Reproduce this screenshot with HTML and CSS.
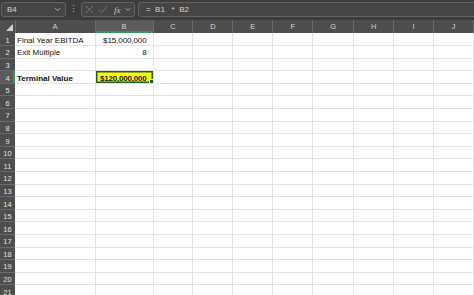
FILE: index.html
```html
<!DOCTYPE html>
<html lang="en">
<head>
    <meta charset="UTF-8">
    <meta name="viewport" content="width=device-width, initial-scale=1.0">
    <title>Terminal Value</title>
    <link rel="stylesheet" href="styles.css">
</head>
<body>
    <div class="toolbar">
        <div class="namebox">
            <span>B4</span>
            <svg class="chev" width="7" height="5" viewBox="0 0 7 5"><path d="M1 1.2 L3.5 3.7 L6 1.2" fill="none" stroke="#b5b5b5" stroke-width="1"/></svg>
        </div>
        <span class="dots">&#8942;</span>
        <div class="fxbox">
            <svg width="9" height="9" viewBox="0 0 9 9"><path d="M1 1 L8 8 M8 1 L1 8" stroke="#7c7c7c" stroke-width="0.9"/></svg>
            <svg width="10" height="9" viewBox="0 0 10 9"><path d="M1 4.8 L3.8 7.6 L9 1.4" fill="none" stroke="#7c7c7c" stroke-width="0.9"/></svg>
            <i class="fx">fx</i>
            <svg width="6" height="5" viewBox="0 0 6 5"><path d="M0.8 1.2 L3 3.5 L5.2 1.2" fill="none" stroke="#b5b5b5" stroke-width="0.9"/></svg>
        </div>
        <div class="formula">=&nbsp;&nbsp;B1&nbsp;&nbsp;&nbsp;*&nbsp;&nbsp;B2</div>
    </div>

    <table class="sheet">
        <colgroup>
            <col class="c-rh"><col class="c-a"><col class="c-b"><col><col><col><col><col class="c-g"><col><col><col>
        </colgroup>
        <tr class="head">
            <th class="corner"></th><th>A</th><th class="sel">B</th><th>C</th><th>D</th><th>E</th><th>F</th><th>G</th><th>H</th><th>I</th><th>J</th>
        </tr>
        <tr><td class="rh">1</td><td class="txt">Final Year EBITDA</td><td class="num">$15,000,000</td><td></td><td></td><td></td><td></td><td></td><td></td><td></td><td></td></tr>
        <tr><td class="rh">2</td><td class="txt">Exit Multiple</td><td class="num">8</td><td></td><td></td><td></td><td></td><td></td><td></td><td></td><td></td></tr>
        <tr><td class="rh">3</td><td></td><td></td><td></td><td></td><td></td><td></td><td></td><td></td><td></td><td></td></tr>
        <tr><td class="rh sel">4</td><td class="txt bold">Terminal Value</td><td class="num bold active">$120,000,000</td><td></td><td></td><td></td><td></td><td></td><td></td><td></td><td></td></tr>
        <tr><td class="rh">5</td><td></td><td></td><td></td><td></td><td></td><td></td><td></td><td></td><td></td><td></td></tr>
        <tr><td class="rh">6</td><td></td><td></td><td></td><td></td><td></td><td></td><td></td><td></td><td></td><td></td></tr>
        <tr><td class="rh">7</td><td></td><td></td><td></td><td></td><td></td><td></td><td></td><td></td><td></td><td></td></tr>
        <tr><td class="rh">8</td><td></td><td></td><td></td><td></td><td></td><td></td><td></td><td></td><td></td><td></td></tr>
        <tr><td class="rh">9</td><td></td><td></td><td></td><td></td><td></td><td></td><td></td><td></td><td></td><td></td></tr>
        <tr><td class="rh">10</td><td></td><td></td><td></td><td></td><td></td><td></td><td></td><td></td><td></td><td></td></tr>
        <tr><td class="rh">11</td><td></td><td></td><td></td><td></td><td></td><td></td><td></td><td></td><td></td><td></td></tr>
        <tr><td class="rh">12</td><td></td><td></td><td></td><td></td><td></td><td></td><td></td><td></td><td></td><td></td></tr>
        <tr><td class="rh">13</td><td></td><td></td><td></td><td></td><td></td><td></td><td></td><td></td><td></td><td></td></tr>
        <tr><td class="rh">14</td><td></td><td></td><td></td><td></td><td></td><td></td><td></td><td></td><td></td><td></td></tr>
        <tr><td class="rh">15</td><td></td><td></td><td></td><td></td><td></td><td></td><td></td><td></td><td></td><td></td></tr>
        <tr><td class="rh">16</td><td></td><td></td><td></td><td></td><td></td><td></td><td></td><td></td><td></td><td></td></tr>
        <tr><td class="rh">17</td><td></td><td></td><td></td><td></td><td></td><td></td><td></td><td></td><td></td><td></td></tr>
        <tr><td class="rh">18</td><td></td><td></td><td></td><td></td><td></td><td></td><td></td><td></td><td></td><td></td></tr>
        <tr><td class="rh">19</td><td></td><td></td><td></td><td></td><td></td><td></td><td></td><td></td><td></td><td></td></tr>
        <tr><td class="rh">20</td><td></td><td></td><td></td><td></td><td></td><td></td><td></td><td></td><td></td><td></td></tr>
        <tr><td class="rh">21</td><td></td><td></td><td></td><td></td><td></td><td></td><td></td><td></td><td></td><td></td></tr>
    </table>
</body>
</html>
```

FILE: styles.css
```css
body {
    margin: 0;
    background-color: #3c3c3c;
    font-family: "Liberation Sans", Arial, sans-serif;
    font-size: 8px;
    overflow: hidden;
    height: 295px;
}
.toolbar {
    display: flex;
    height: 20px;
    padding: 2px 0 3px 1px;
    box-sizing: border-box;
    color: #d6d6d6;
}
.namebox, .fxbox, .formula {
    background-color: #454545;
    border: 1px solid #626262;
    border-radius: 3px;
    box-sizing: border-box;
    display: flex;
    align-items: center;
}
.namebox {
    width: 65px;
    padding: 0 4px 0 5px;
    justify-content: space-between;
}
.dots {
    width: 15px;
    text-align: center;
    line-height: 15px;
    font-size: 9px;
    color: #bdbdbd;
}
.fxbox {
    width: 54px;
    padding: 0 2px 0 3px;
    gap: 4px;
}
.fx {
    font-family: "Liberation Serif", serif;
    font-size: 9px;
    color: #c8c8c8;
    margin-left: 2px;
}
.formula {
    flex: 1;
    margin-left: 3px;
    margin-right: -4px;
    padding-left: 7px;
    font-size: 8px;
}
.sheet {
    border-collapse: collapse;
    table-layout: fixed;
    width: 474px;
}
.c-rh { width: 15px; }
.c-a { width: 80px; }
.c-b { width: 58px; }
.c-g { width: 41px; }
.sheet tr {
    height: 12.6px;
}
.sheet td, .sheet th {
    padding: 0;
    line-height: 8px;
    overflow: hidden;
    white-space: nowrap;
}
.sheet tr.head {
    height: 13px;
}
.head th {
    background-color: #4e4e4e;
    border-right: 1px solid #6a6a6a;
    color: #d4d4d4;
    font-weight: normal;
    font-size: 7.5px;
}
.head th.sel {
    background-color: #5b5b5b;
    box-shadow: inset 0 -2px 0 #2f9a5c;
}
.corner {
    position: relative;
}
.corner::after {
    content: "";
    position: absolute;
    right: 2px;
    bottom: 2px;
    border-style: solid;
    border-width: 0 0 7px 7px;
    border-color: transparent transparent #d2d2d2 transparent;
}
.sheet td {
    background-color: #ffffff;
    border-right: 1px solid #e2e2e2;
    border-bottom: 1px solid #e2e2e2;
    color: #111111;
    padding-top: 3px;
}
.sheet td.rh {
    background-color: #4e4e4e;
    border-right: none;
    border-bottom: 1px solid #6a6a6a;
    color: #e2e2e2;
    text-align: center;
    font-size: 7.5px;
}
.sheet td.rh.sel {
    background-color: #5b5b5b;
    box-shadow: inset -2px 0 0 #2f9a5c;
}
.sheet td.txt {
    padding-left: 2px;
}
.sheet td.num {
    text-align: right;
    padding-right: 6px;
    letter-spacing: -0.1px;
}
.bold {
    font-weight: bold;
}
.sheet td.active {
    background-color: #ffff00;
    box-shadow: inset 0 0 0 1.5px #1d5c36;
    position: relative;
    letter-spacing: -0.2px;
}
.active::after {
    content: "";
    position: absolute;
    right: -2px;
    bottom: -2px;
    width: 4px;
    height: 4px;
    background-color: #1d5c36;
    border: 1px solid #ffffff;
}
```
